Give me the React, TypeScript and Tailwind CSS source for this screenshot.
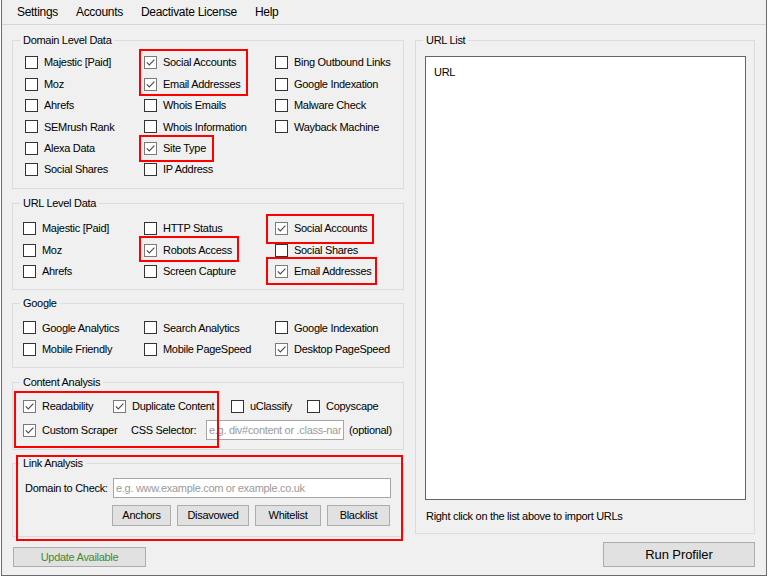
import { FC, ReactNode } from 'react';

const BOX_ON = 'border-[#7a7a7a]';
const BOX_OFF = 'border-[#333333]';

const Check: FC<{ label: string; checked?: boolean }> = ({ label, checked }) => (
  <label className="flex items-center gap-[6px] whitespace-nowrap">
    <span className={`flex h-[13px] w-[13px] shrink-0 items-center justify-center border bg-white ${checked ? BOX_ON : BOX_OFF}`}>
      {checked && (
        <svg width="11" height="11" viewBox="0 0 11 11">
          <path d="M1.8 5.4 L4.3 7.9 L9.4 2.6" fill="none" stroke="#4a4a4a" strokeWidth="1.1" />
        </svg>
      )}
    </span>
    <span>{label}</span>
  </label>
);

const Group: FC<{ title: string; className: string; children: ReactNode }> = ({ title, className, children }) => (
  <fieldset className={`w-full border border-[#dcdcdc] ${className}`}>
    <legend className="ml-[7px] px-[3px] leading-[14px]">{title}</legend>
    {children}
  </fieldset>
);

const Btn: FC<{ label: string; className: string }> = ({ label, className }) => (
  <button className={`flex items-center justify-center border border-[#adadad] bg-[#e1e1e1] ${className}`}>{label}</button>
);

type Item = { label: string; checked?: boolean } | null;

const domainRows: Item[][] = [
  [{ label: 'Majestic [Paid]' }, { label: 'Social Accounts', checked: true }, { label: 'Bing Outbound Links' }],
  [{ label: 'Moz' }, { label: 'Email Addresses', checked: true }, { label: 'Google Indexation' }],
  [{ label: 'Ahrefs' }, { label: 'Whois Emails' }, { label: 'Malware Check' }],
  [{ label: 'SEMrush Rank' }, { label: 'Whois Information' }, { label: 'Wayback Machine' }],
  [{ label: 'Alexa Data' }, { label: 'Site Type', checked: true }, null],
  [{ label: 'Social Shares' }, { label: 'IP Address' }, null],
];

const urlRows: Item[][] = [
  [{ label: 'Majestic [Paid]' }, { label: 'HTTP Status' }, { label: 'Social Accounts', checked: true }],
  [{ label: 'Moz' }, { label: 'Robots Access', checked: true }, { label: 'Social Shares' }],
  [{ label: 'Ahrefs' }, { label: 'Screen Capture' }, { label: 'Email Addresses', checked: true }],
];

const googleRows: Item[][] = [
  [{ label: 'Google Analytics' }, { label: 'Search Analytics' }, { label: 'Google Indexation' }],
  [{ label: 'Mobile Friendly' }, { label: 'Mobile PageSpeed' }, { label: 'Desktop PageSpeed', checked: true }],
];

const Cells: FC<{ rows: Item[][] }> = ({ rows }) => (
  <>
    {rows.flat().map((it, i) => (
      <div key={i} className="flex items-center">
        {it && <Check label={it.label} checked={it.checked} />}
      </div>
    ))}
  </>
);

const App: FC = () => {
  return (
    <div className="relative h-[578px] w-[768px] bg-white font-['Liberation_Sans',Arial,sans-serif] text-[11px] tracking-[-0.3px] text-black">
      <div className="ml-[1px] flex h-[576px] w-[766px] flex-col border-x border-b border-[#6b6b6b] bg-[#f0f0f0]">
        {/* menu */}
        <div className="flex h-[25px] items-center gap-[18px] border-b border-[#d5d5d5] pl-[15px] text-[12px]">
          <span>Settings</span>
          <span>Accounts</span>
          <span>Deactivate License</span>
          <span>Help</span>
        </div>

        <div className="flex gap-[11px] pl-[10px] pt-[8px]">
          {/* left column */}
          <div className="flex w-[392px] flex-col">
            <Group title="Domain Level Data" className="h-[156px]">
              <div className="grid grid-cols-[119px_131px_1fr] auto-rows-[21.4px] pl-[12px] pt-[5px]">
                <Cells rows={domainRows} />
              </div>
            </Group>

            <Group title="URL Level Data" className="mt-[7px] h-[94px]">
              <div className="grid grid-cols-[121px_131px_1fr] auto-rows-[21.4px] pl-[10px] pt-[8px]">
                <Cells rows={urlRows} />
              </div>
            </Group>

            <Group title="Google" className="mt-[6px] h-[72px]">
              <div className="grid grid-cols-[121px_131px_1fr] auto-rows-[21.6px] pl-[10px] pt-[7px]">
                <Cells rows={googleRows} />
              </div>
            </Group>

            <Group title="Content Analysis" className="mt-[7px] h-[75px]">
              <div className="flex flex-col pl-[10px] pt-[7px]">
                <div className="flex h-[21px] items-center">
                  <div className="w-[90px]"><Check label="Readability" checked /></div>
                  <div className="w-[118px]"><Check label="Duplicate Content" checked /></div>
                  <div className="w-[76px]"><Check label="uClassify" /></div>
                  <Check label="Copyscape" />
                </div>
                <div className="mt-[3px] flex h-[20px] items-center">
                  <div className="w-[108px]"><Check label="Custom Scraper" checked /></div>
                  <span className="w-[75px]">CSS Selector:</span>
                  <input
                    className="h-[20px] w-[138px] border border-[#a6a6a6] bg-white px-[2px] outline-none placeholder:text-[#9a9a9a]"
                    placeholder="e.g. div#content or .class-name"
                  />
                  <span className="ml-[5px]">(optional)</span>
                </div>
              </div>
            </Group>

            <Group title="Link Analysis" className="mt-[6px] h-[81px]">
              <div className="flex flex-col pl-[12px] pt-[8px]">
                <div className="flex h-[20px] items-center">
                  <span className="w-[88px]">Domain to Check:</span>
                  <input
                    className="h-[20px] w-[278px] border border-[#a6a6a6] bg-white px-[2px] outline-none placeholder:text-[#9a9a9a]"
                    placeholder="e.g. www.example.com or example.co.uk"
                  />
                </div>
                <div className="mt-[7px] flex gap-[6px] pl-[87px]">
                  <Btn label="Anchors" className="h-[21px] w-[59px]" />
                  <Btn label="Disavowed" className="h-[21px] w-[72px]" />
                  <Btn label="Whitelist" className="h-[21px] w-[66px]" />
                  <Btn label="Blacklist" className="h-[21px] w-[63px]" />
                </div>
              </div>
            </Group>

            <Btn label="Update Available" className="ml-[1px] mt-[10px] h-[20px] w-[133px] text-[#3f8a2c]" />
          </div>

          {/* right column */}
          <div className="flex w-[340px] flex-col">
            <Group title="URL List" className="h-[501px]">
              <div className="pl-[9px] pt-[9px]">
                <div className="h-[444px] w-[321px] border border-[#646464] bg-white pl-[8px] pt-[8px] leading-[14px]">URL</div>
                <div className="mt-[9px] pl-[1px] leading-[14px]">Right click on the list above to import URLs</div>
              </div>
            </Group>
            <Btn label="Run Profiler" className="mt-[8px] h-[25px] w-[152px] self-end text-[13px] tracking-[-0.1px]" />
          </div>
        </div>
      </div>

      {/* red annotation boxes */}
      <div className="absolute left-[139px] top-[49px] h-[47px] w-[109px] border-2 border-[#ff0000]" />
      <div className="absolute left-[139px] top-[135px] h-[27px] w-[75px] border-2 border-[#ff0000]" />
      <div className="absolute left-[266px] top-[214px] h-[30px] w-[108px] border-2 border-[#ff0000]" />
      <div className="absolute left-[139px] top-[236px] h-[26px] w-[100px] border-2 border-[#ff0000]" />
      <div className="absolute left-[266px] top-[257px] h-[28px] w-[111px] border-2 border-[#ff0000]" />
      <div className="absolute left-[14px] top-[391px] h-[57px] w-[205px] border-2 border-[#ff0000]" />
      <div className="absolute left-[16px] top-[455px] h-[86px] w-[387px] border-2 border-[#ff0000]" />
    </div>
  );
};

export default App;
